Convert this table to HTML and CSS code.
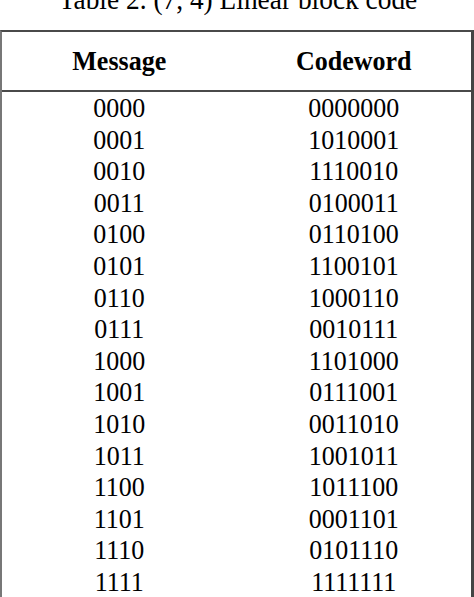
FILE: index.html
```html
<!DOCTYPE html>
<html>
<head>
<meta charset="utf-8">
<link rel="stylesheet" href="styles.css">
</head>
<body>
<div class="caption">Table 2. (7, 4) Linear block code</div>
<div class="tbl">
  <div class="head">
    <div class="cell">Message</div>
    <div class="cell">Codeword</div>
  </div>
  <div class="body">
    <div class="cell">0000</div><div class="cell">0000000</div>
    <div class="cell">0001</div><div class="cell">1010001</div>
    <div class="cell">0010</div><div class="cell">1110010</div>
    <div class="cell">0011</div><div class="cell">0100011</div>
    <div class="cell">0100</div><div class="cell">0110100</div>
    <div class="cell">0101</div><div class="cell">1100101</div>
    <div class="cell">0110</div><div class="cell">1000110</div>
    <div class="cell">0111</div><div class="cell">0010111</div>
    <div class="cell">1000</div><div class="cell">1101000</div>
    <div class="cell">1001</div><div class="cell">0111001</div>
    <div class="cell">1010</div><div class="cell">0011010</div>
    <div class="cell">1011</div><div class="cell">1001011</div>
    <div class="cell">1100</div><div class="cell">1011100</div>
    <div class="cell">1101</div><div class="cell">0001101</div>
    <div class="cell">1110</div><div class="cell">0101110</div>
    <div class="cell">1111</div><div class="cell">1111111</div>
  </div>
</div>
</body>
</html>
```
FILE: styles.css
```css
html, body {
  margin: 0;
  padding: 0;
  background: #fff;
  overflow: hidden;
}
body {
  font-family: "Liberation Serif", "Times New Roman", serif;
  color: #000;
  width: 474px;
  height: 597px;
}
.caption {
  font-size: 27.4px;
  line-height: 31px;
  text-align: center;
  margin-top: -15px;
  height: 31px;
  margin-bottom: 14px;
  padding-left: 2px;
  transform: scaleY(1.08);
  transform-origin: 50% 80%;
}
.tbl {
  border-top: 2px solid #4a4a4a;
  border-left: 2px solid #777;
  border-right: 3px solid #444;
}
.head {
  display: grid;
  grid-template-columns: 1fr 1fr;
  height: 58px;
  border-bottom: 2px solid #4a4a4a;
  font-weight: bold;
  font-size: 26px;
  line-height: 58px;
}
.body {
  display: grid;
  grid-template-columns: 1fr 1fr;
  grid-auto-rows: 31.6px;
  font-size: 26px;
  line-height: 31.6px;
}
.cell {
  text-align: center;
  transform: scaleY(1.08);
}
```
